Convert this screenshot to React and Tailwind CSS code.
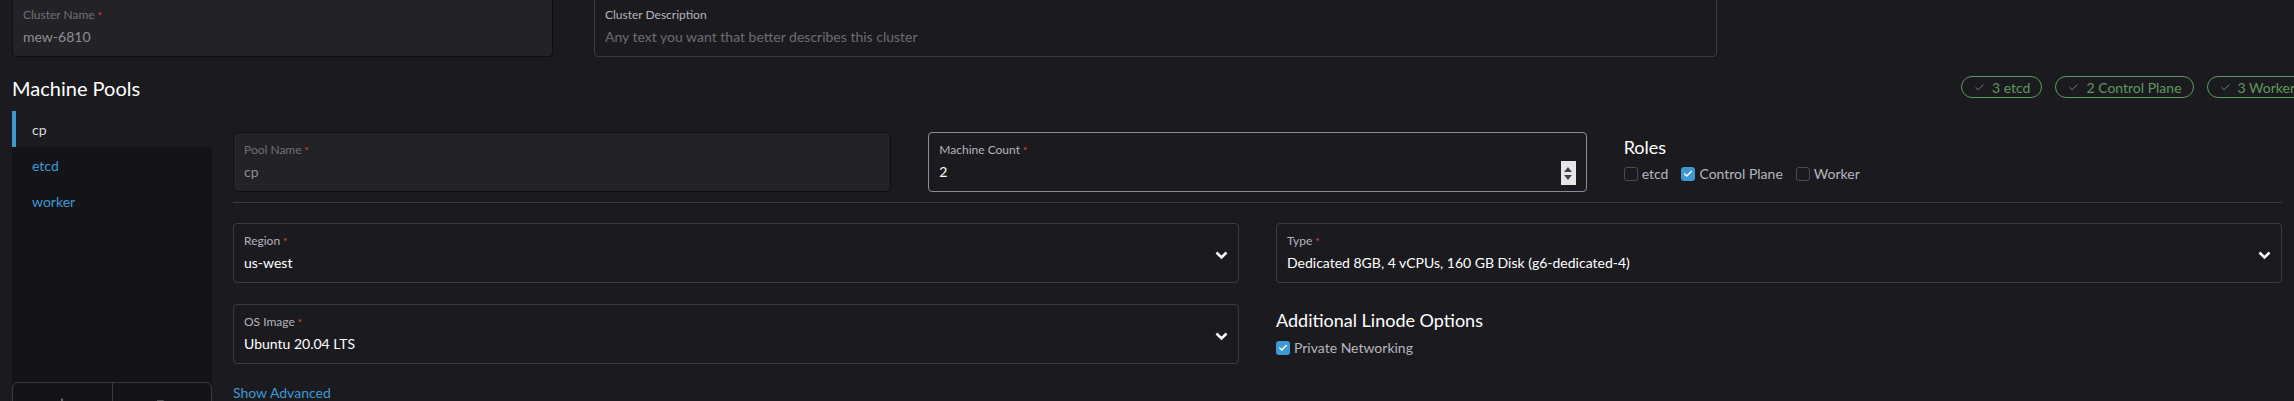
import React from 'react';
import { Check, Plus, Copy } from 'lucide-react';

// campo de formulário no estilo do tema escuro
const Field = ({ label, value, placeholder, required, disabled, focused, select, number, className = '' }) => (
  <div
    className={`relative h-[60px] rounded border px-[10px] pt-[8px] ${
      disabled
        ? 'bg-[#232327] border-[#0f0f12]'
        : focused
        ? 'border-[#8b8c9a]'
        : 'border-[#3b3b41]'
    } ${className}`}
  >
    <div className={`text-[12px] leading-[18px] ${disabled ? 'text-[#6f6f78]' : 'text-[#b4b4bd]'}`}>
      {label}
      {required && <span className="text-[#f64747] text-[10px] align-top ml-[3px]">*</span>}
    </div>
    <div
      className={`mt-[3px] text-[14px] leading-[20px] ${
        disabled ? 'text-[#8e8e96]' : value ? 'text-white' : 'text-[#6c6c75]'
      }`}
    >
      {value || placeholder}
    </div>
    {select && (
      <svg className="absolute right-[10px] top-[27px]" width="13" height="9" viewBox="0 0 13 9">
        <polyline points="1.5,1.5 6.5,6.5 11.5,1.5" fill="none" stroke="#fff" strokeWidth="2.6" />
      </svg>
    )}
    {number && (
      <div className="absolute right-[10px] top-[28px] w-[15px] h-[24px] bg-[#e6e6e6] flex flex-col items-center justify-center gap-[3px]">
        <svg width="8" height="5" viewBox="0 0 8 5"><polygon points="4,0 8,5 0,5" fill="#444" /></svg>
        <svg width="8" height="5" viewBox="0 0 8 5"><polygon points="0,0 8,0 4,5" fill="#444" /></svg>
      </div>
    )}
  </div>
);

const Box = ({ checked, label }) => (
  <label className="flex items-center gap-[4px]">
    {checked ? (
      <span className="w-[14px] h-[14px] rounded-[3px] bg-[#3d98d3] flex items-center justify-center">
        <Check className="w-[10px] h-[10px] text-white" strokeWidth={3.5} />
      </span>
    ) : (
      <span className="w-[14px] h-[14px] rounded-[3px] border border-[#4a4a52]" />
    )}
    <span className="text-[14px] leading-[18px] text-[#b6b6bf]">{label}</span>
  </label>
);

const Badge = ({ children }) => (
  <div className="h-[22px] flex items-center gap-[7px] pl-[12px] pr-[11px] rounded-full border border-[#5d995d] text-[#5d995d] text-[14px] whitespace-nowrap">
    <Check className="w-[11px] h-[11px]" strokeWidth={2} />
    {children}
  </div>
);

const pools = ['cp', 'etcd', 'worker'];

export default function App() {
  return (
    <div className="h-[401px] w-full overflow-hidden bg-[#1b1b1f] font-['Lato',sans-serif] px-3">
      <div className="flex gap-[41px] -mt-[3px]">
        <Field className="w-[541px]" label="Cluster Name" value="mew-6810" required disabled />
        <Field className="w-[1123px]" label="Cluster Description" placeholder="Any text you want that better describes this cluster" />
      </div>

      <div className="mt-[19px] h-[24px] flex items-center justify-between">
        <h2 className="text-[20px] leading-[24px] text-white">Machine Pools</h2>
        <div className="flex gap-[13px] -mr-[25px] -mt-[2px]">
          <Badge>3 etcd</Badge>
          <Badge>2 Control Plane</Badge>
          <Badge>3 Worker</Badge>
        </div>
      </div>

      <div className="mt-[11px] flex gap-[21px]">
        <div className="w-[200px] h-[311px] bg-[#141418] flex flex-col shrink-0">
          {pools.map((p, i) => (
            <div
              key={p}
              className={`h-[36px] flex items-center text-[14px] ${
                i === 0 ? 'bg-[#1b1b1f] border-l-4 border-[#3d98d3] pl-4 text-[#d6d6dc]' : 'pl-5 text-[#3d98d3]'
              }`}
            >
              {p}
            </div>
          ))}
          <div className="mt-auto h-[40px] flex border border-[#3a3a40] rounded-t-md">
            <div className="flex-1 flex justify-center pt-[13px] border-r border-[#3a3a40]">
              <Plus className="w-[14px] h-[14px] text-[#d6d6dc]" strokeWidth={1.5} />
            </div>
            <div className="flex-1 flex justify-center pt-[17px]">
              <Copy className="w-[14px] h-[14px] text-[#d6d6dc]" strokeWidth={1.5} />
            </div>
          </div>
        </div>

        <div className="flex-1 pt-[21px]">
          <div className="grid grid-cols-3 gap-[37px]">
            <Field label="Pool Name" value="cp" required disabled />
            <Field label="Machine Count" value="2" required focused number />
            <div className="pt-[4px]">
              <div className="text-[18px] leading-[22px] text-white">Roles</div>
              <div className="mt-[7px] flex gap-[13px]">
                <Box label="etcd" />
                <Box label="Control Plane" checked />
                <Box label="Worker" />
              </div>
            </div>
          </div>

          <div className="mt-[10px] h-px bg-[#3a3a40]" />

          <div className="mt-[20px] grid grid-cols-2 gap-x-[37px] gap-y-[21px]">
            <Field label="Region" value="us-west" required select />
            <Field label="Type" value="Dedicated 8GB, 4 vCPUs, 160 GB Disk (g6-dedicated-4)" required select />
            <Field label="OS Image" value="Ubuntu 20.04 LTS" required select />
            <div className="pt-[5px]">
              <div className="text-[18px] leading-[22px] text-white">Additional Linode Options</div>
              <div className="mt-[8px] flex">
                <Box label="Private Networking" checked />
              </div>
            </div>
          </div>

          <div className="mt-[19px] text-[14px] leading-[20px] text-[#3d98d3]">Show Advanced</div>
        </div>
      </div>
    </div>
  );
}
